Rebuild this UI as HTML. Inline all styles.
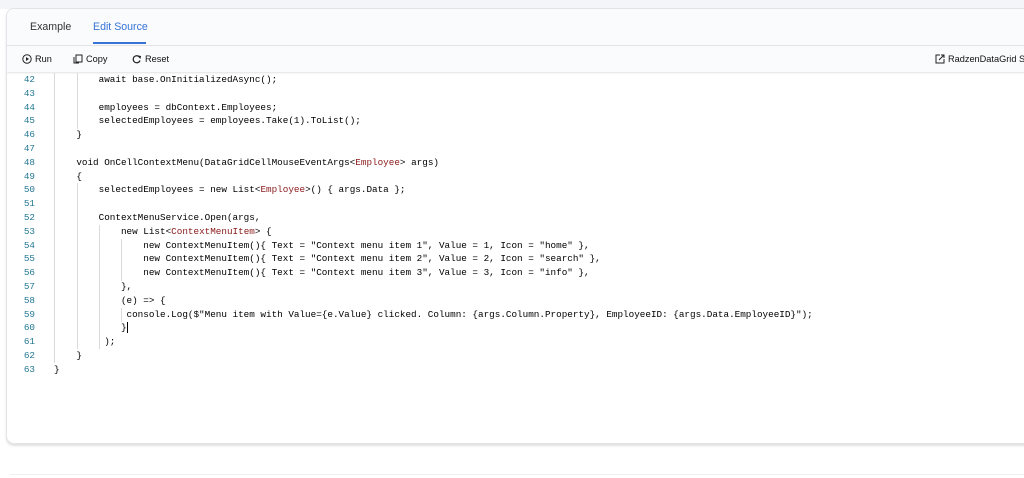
<!DOCTYPE html>
<html><head><style>
body{margin:0;width:1024px;height:478px;overflow:hidden;background:#fff;font-family:"Liberation Sans",sans-serif;position:relative}
.top{position:absolute;left:0;top:0;width:1024px;height:9px;background:#f3f5f9}
.card{position:absolute;left:6px;top:8px;width:1040px;height:434px;border:1px solid #e2e4e8;border-radius:8px;background:#fff;box-shadow:0 2px 2px rgba(0,0,0,.12);overflow:hidden}
.tabs{position:absolute;left:0;top:0;right:0;height:36px;background:#fafbfc;border-bottom:1px solid #e4e6ea}
.tab{position:absolute;top:12px;font-size:10.6px;color:#333}
.tab.act{color:#3874d8}
.ul{position:absolute;left:86px;top:33px;width:53px;height:2px;background:#3874d8}
.tb{position:absolute;left:0;top:37px;right:0;height:26px;background:#fafbfc;box-shadow:0 1px 2px rgba(0,0,0,.12)}
.btn{position:absolute;top:8px;font-size:9.2px;color:#111;display:flex;align-items:center;gap:3px}
.code{position:absolute;left:0;top:64px;font-family:"Liberation Mono",monospace;font-size:9.3px;line-height:13.8px;white-space:pre;color:#000}
.ln{position:absolute;left:0;width:28px;text-align:right;color:#237893}
.tx{position:absolute;left:47px}
.g{color:#8a1a1a}
.guide{position:absolute;width:1px;background:#dadada}
.bot{position:absolute;left:10px;top:474px;width:1014px;height:1px;background:#eef0f3}
</style></head><body>
<div class="top"></div>
<div class="card">
<div class="tabs"><span class="tab" style="left:23px">Example</span><span class="tab act" style="left:86px">Edit Source</span><div class="ul"></div></div>
<div class="tb">
<span class="btn" style="left:15px"><svg width="10" height="10" viewBox="0 0 10 10"><circle cx="5" cy="5" r="4.2" fill="none" stroke="#222" stroke-width="1"/><path d="M4 3v4l3-2z" fill="#222"/></svg>Run</span>
<span class="btn" style="left:66px"><svg width="10" height="10" viewBox="0 0 10 10"><rect x="3" y="1" width="6" height="7" fill="none" stroke="#222"/><path d="M1 3v6h5" fill="none" stroke="#222"/></svg>Copy</span>
<span class="btn" style="left:125px"><svg width="10" height="10" viewBox="0 0 10 10"><path d="M8 4A3.5 3.5 0 1 0 8 6.5" fill="none" stroke="#222" stroke-width="1.2"/><path d="M6 1.5L9 2 8.5 5z" fill="#222"/></svg>Reset</span>
<span class="btn" style="left:928px"><svg width="10" height="10" viewBox="0 0 10 10"><path d="M5 1H1v8h8V5" fill="none" stroke="#222"/><path d="M4 6l5-5M6 1h3v3" fill="none" stroke="#222"/></svg>RadzenDataGrid Sc</span>
</div>
<div class="code">
<div class="guide" style="left:47px;top:0;height:290px"></div>
<div class="guide" style="left:70px;top:0;height:56px"></div>
<div class="guide" style="left:70px;top:110px;height:166px"></div>
<div class="guide" style="left:92px;top:152px;height:124px"></div>
<div class="guide" style="left:114px;top:166px;height:42px"></div>
<div class="guide" style="left:114px;top:235px;height:14px"></div>
<div class="ln" style="top:0">42
43
44
45
46
47
48
49
50
51
52
53
54
55
56
57
58
59
60
61
62
63</div>
<div class="tx" style="top:0">        await base.OnInitializedAsync();

        employees = dbContext.Employees;
        selectedEmployees = employees.Take(1).ToList();
    }

    void OnCellContextMenu(DataGridCellMouseEventArgs&lt;<span class="g">Employee</span>&gt; args)
    {
        selectedEmployees = new List&lt;<span class="g">Employee</span>&gt;() { args.Data };

        ContextMenuService.Open(args,
            new List&lt;<span class="g">ContextMenuItem</span>&gt; {
                new ContextMenuItem(){ Text = "Context menu item 1", Value = 1, Icon = "home" },
                new ContextMenuItem(){ Text = "Context menu item 2", Value = 2, Icon = "search" },
                new ContextMenuItem(){ Text = "Context menu item 3", Value = 3, Icon = "info" },
            },
            (e) =&gt; {
             console.Log($"Menu item with Value={e.Value} clicked. Column: {args.Column.Property}, EmployeeID: {args.Data.EmployeeID}");
            }<span style="border-left:1px solid #000"></span>
         );
    }
}</div>
</div>
</div>
<div class="bot"></div>
</body></html>
